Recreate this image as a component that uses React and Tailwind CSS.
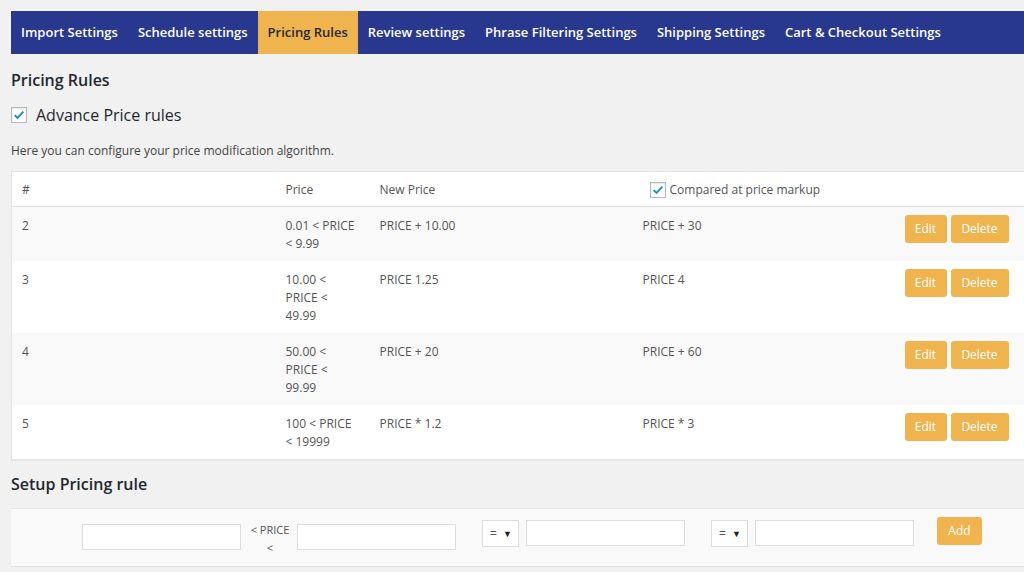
import React from 'react';

const tabs = [
  'Import Settings',
  'Schedule settings',
  'Pricing Rules',
  'Review settings',
  'Phrase Filtering Settings',
  'Shipping Settings',
  'Cart & Checkout Settings',
];

const rules = [
  { id: 2, price: '0.01 < PRICE < 9.99', next: 'PRICE + 10.00', compare: 'PRICE + 30' },
  { id: 3, price: '10.00 < PRICE < 49.99', next: 'PRICE 1.25', compare: 'PRICE 4' },
  { id: 4, price: '50.00 < PRICE < 99.99', next: 'PRICE + 20', compare: 'PRICE + 60' },
  { id: 5, price: '100 < PRICE < 19999', next: 'PRICE * 1.2', compare: 'PRICE * 3' },
];

// WordPress-like checked box
const CheckBox = () => (
  <span className="inline-flex h-4 w-4 shrink-0 items-center justify-center border border-[#b4b9be] bg-white shadow-[inset_0_1px_2px_rgba(0,0,0,0.1)]">
    <svg viewBox="0 0 16 16" className="h-[14px] w-[14px]">
      <path d="M3 8.2 L6.3 11.4 L13 4.2" fill="none" stroke="#1e8cbe" strokeWidth="2.2" />
    </svg>
  </span>
);

const Btn = ({ children, className = '' }) => (
  <button className={`h-[28px] rounded-[3px] bg-[#f0b44e] text-[12px] text-white ${className}`}>
    {children}
  </button>
);

const Select = ({ className = '' }) => (
  <div className={`flex h-[27px] w-[37px] items-center justify-between border border-[#dddddd] bg-white pl-[7px] pr-[6px] text-[12px] text-[#555] ${className}`}>
    <span>=</span>
    <span className="text-[9px] text-[#222]">▼</span>
  </div>
);

const Field = ({ className = '' }) => (
  <div className={`h-[26px] w-[159px] border border-[#dddddd] bg-white ${className}`} />
);

export default function App() {
  return (
    <div
      className="h-[572px] w-[1024px] overflow-hidden bg-[#f1f1f1] pl-[11px] pt-[11px] text-[#555]"
      style={{ fontFamily: '"Open Sans", "Liberation Sans", sans-serif' }}
    >
      <nav className="flex h-[43px] w-[1013px] items-stretch bg-[#29388f]">
        {tabs.map((t) => (
          <div
            key={t}
            className={`flex items-center px-[10px] text-[13px] font-semibold ${
              t === 'Pricing Rules' ? 'bg-[#f0b44e] text-[#23282d]' : 'text-white'
            }`}
          >
            {t}
          </div>
        ))}
      </nav>

      <h2 className="mt-[15px] text-[16px] font-semibold leading-[22px] text-[#23282d]">Pricing Rules</h2>

      <label className="mt-[13px] flex items-center gap-[9px]">
        <CheckBox />
        <span className="text-[16px] leading-[22px] text-[#23282d]">Advance Price rules</span>
      </label>

      <p className="mt-[16px] text-[12px] leading-[18px] text-[#444]">
        Here you can configure your price modification algorithm.
      </p>

      <table className="mt-[11px] w-[1030px] table-fixed border-collapse border border-[#e5e5e5] bg-white text-[12px] leading-[18px] shadow-[0_1px_1px_rgba(0,0,0,0.04)]">
        <colgroup>
          <col className="w-[264px]" />
          <col className="w-[94px]" />
          <col className="w-[263px]" />
          <col className="w-[262px]" />
          <col />
        </colgroup>
        <thead>
          <tr className="h-[35px] border-b border-[#e1e1e1]">
            <th className="px-[10px] pt-[2px] text-left font-normal">#</th>
            <th className="px-[10px] pt-[2px] text-left font-normal">Price</th>
            <th className="px-[10px] pt-[2px] text-left font-normal">New Price</th>
            <th className="pl-[17px] pt-[2px] text-left font-normal">
              <span className="flex items-center gap-[4px]">
                <CheckBox />
                <span>Compared at price markup</span>
              </span>
            </th>
            <th />
          </tr>
        </thead>
        <tbody>
          {rules.map((r, i) => (
            <tr key={r.id} className={i % 2 === 0 ? 'bg-[#f9f9f9]' : 'bg-white'}>
              <td className="px-[10px] pb-[8px] pt-[10px] align-top">{r.id}</td>
              <td className="px-[10px] pb-[8px] pt-[10px] align-top">{r.price}</td>
              <td className="px-[10px] pb-[8px] pt-[10px] align-top">{r.next}</td>
              <td className="px-[10px] pb-[8px] pt-[10px] align-top">{r.compare}</td>
              <td className="pb-[8px] pt-[8px] align-top">
                <div className="flex gap-[4px] pl-[10px]">
                  <Btn className="w-[42px]">Edit</Btn>
                  <Btn className="w-[58px]">Delete</Btn>
                </div>
              </td>
            </tr>
          ))}
        </tbody>
      </table>

      <h2 className="mt-[13px] text-[16px] font-semibold leading-[22px] text-[#23282d]">Setup Pricing rule</h2>

      <div className="mt-[13px] flex h-[58px] w-[1013px] items-start border-t border-[#e5e5e5] bg-[#f9f9f9] pl-[71px] shadow-[0_1px_1px_rgba(0,0,0,0.06)]">
        <Field className="mt-[15px] w-[158px]" />
        <div className="ml-[6px] mt-[12px] w-[46px] text-center text-[11px] leading-[18px]">
          &lt; PRICE
          <br />
          &lt;
        </div>
        <Field className="ml-[4px] mt-[15px]" />
        <Select className="ml-[26px] mt-[11px]" />
        <Field className="ml-[7px] mt-[11px] w-[158px]" />
        <Select className="ml-[26px] mt-[11px]" />
        <Field className="ml-[7px] mt-[11px] w-[158px]" />
        <Btn className="ml-[23px] mt-[8px] w-[45px]">Add</Btn>
      </div>
    </div>
  );
}
